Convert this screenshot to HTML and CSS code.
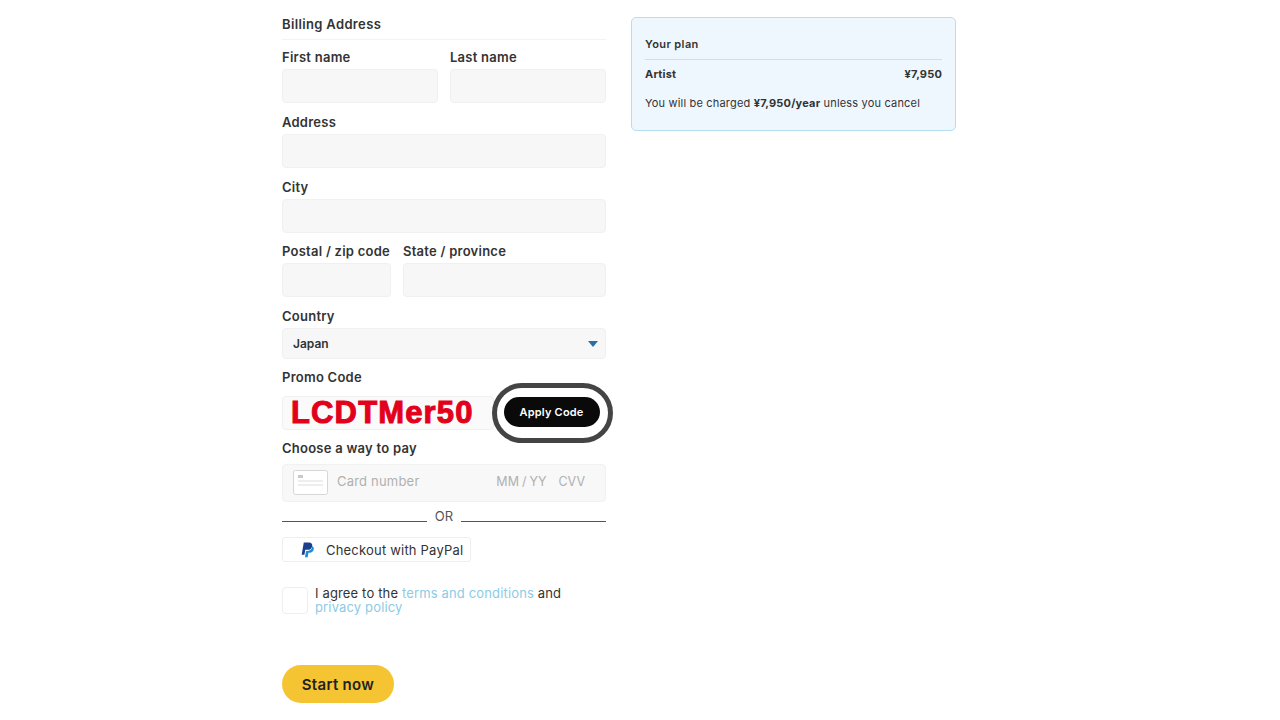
FILE: index.html
```html
<!DOCTYPE html>
<html lang="en">
<head>
    <meta charset="UTF-8">
    <meta name="viewport" content="width=device-width, initial-scale=1.0">
    <title>Checkout</title>
    <link rel="stylesheet" href="styles.css">
</head>
<body>
    <div class="page">
        <!-- Billing form -->
        <form class="billing">
            <h2 class="billing-title">Billing Address</h2>

            <div class="row">
                <div class="field half">
                    <label for="first">First name</label>
                    <input id="first" type="text">
                </div>
                <div class="field half">
                    <label for="last">Last name</label>
                    <input id="last" type="text">
                </div>
            </div>

            <div class="field">
                <label for="address">Address</label>
                <input id="address" type="text">
            </div>

            <div class="field">
                <label for="city">City</label>
                <input id="city" type="text">
            </div>

            <div class="row row-tight">
                <div class="field postal">
                    <label for="postal">Postal / zip code</label>
                    <input id="postal" type="text">
                </div>
                <div class="field state">
                    <label for="state">State / province</label>
                    <input id="state" type="text">
                </div>
            </div>

            <div class="field field-short">
                <label for="country">Country</label>
                <div class="select-wrap">
                    <select id="country">
                        <option>Japan</option>
                    </select>
                </div>
            </div>

            <div class="field field-short">
                <label class="promo-label" for="promo">Promo Code</label>
                <div class="promo">
                    <input id="promo" class="promo-input" type="text" value="LCDTMer50">
                    <div class="apply-ring">
                        <button class="apply" type="button">Apply Code</button>
                    </div>
                </div>
            </div>

            <div class="field">
                <label class="pay-label" for="card">Choose a way to pay</label>
                <div class="card-box">
                    <svg class="card-icon" width="35" height="25" viewBox="0 0 35 25">
                        <rect x="0.5" y="0.5" width="34" height="24" rx="2" fill="#fff" stroke="#d6d6d6"/>
                        <rect x="5" y="5" width="5" height="3" fill="#c9c9c9"/>
                        <path d="M5 11h25M5 15h25" stroke="#dcdcdc"/>
                    </svg>
                    <input id="card" class="card-number" type="text" placeholder="Card number">
                    <span class="card-hint">MM / YY</span>
                    <span class="card-hint">CVV</span>
                </div>
            </div>

            <div class="or"><span>OR</span></div>

            <button class="paypal" type="button">
                <svg width="13" height="16" viewBox="0 0 14 16">
                    <path d="M3 0h5.500c2.600 0 4 1.400 3.600 3.600-.5 2.800-2.400 4.200-5 4.200H4.600L3.700 13H.7z" fill="#1b3f8f"/>
                    <path d="M12.300 3.800c1.300.8 1.700 2 1.400 3.500-.5 2.400-2.100 3.600-4.400 3.600H8l-.8 5H4.300l.3-2L5.500 9h1.700c2.600 0 4.500-1.600 5.100-5.200z" fill="#1c8ad6"/>
                </svg>
                Checkout with PayPal
            </button>

            <div class="agree">
                <input id="agree" class="agree-box" type="checkbox">
                <label for="agree">I agree to the <a href="#">terms and conditions</a> and <a href="#">privacy policy</a></label>
            </div>

            <button class="start" type="submit">Start now</button>
        </form>

        <!-- Plan summary -->
        <aside class="plan">
            <h3 class="plan-title">Your plan</h3>
            <div class="plan-row">
                <span>Artist</span>
                <span>¥7,950</span>
            </div>
            <p class="plan-note">You will be charged <b>¥7,950/year</b> unless you cancel</p>
        </aside>
    </div>
</body>
</html>
```
FILE: styles.css
```css
body {
    font-family: Inter, "Open Sans", sans-serif;
    margin: 0;
    padding: 0;
    background-color: #fff;
    color: #333;
}

.page {
    display: flex;
    align-items: flex-start;
    gap: 25px;
    padding: 16px 0 0 282px;
}

/* Billing form */
.billing {
    width: 324px;
}
.billing-title {
    font-size: 13px;
    font-weight: 600;
    letter-spacing: 0.35px;
    line-height: 16px;
    margin: 0;
    padding-bottom: 7px;
    border-bottom: 1px solid #f3f3f3;
    margin-bottom: 9px;
}
.row {
    display: flex;
    gap: 12px;
}
.half {
    flex: 1;
}
.postal {
    width: 109px;
    flex: none;
}
.state {
    flex: 1;
}
.row-tight {
    margin-top: -1px;
}
.field {
    margin-bottom: 11px;
}
.field-short {
    margin-bottom: 10px;
}
.field label {
    display: block;
    font-size: 13px;
    font-weight: 600;
    letter-spacing: 0.25px;
    line-height: 16px;
    margin-bottom: 4px;
    white-space: nowrap;
}
.field input,
.field select {
    display: block;
    box-sizing: border-box;
    width: 100%;
    height: 34px;
    margin: 0;
    padding: 0 10px;
    font-family: inherit;
    background-color: #f7f7f7;
    border: 1px solid #f0f0f0;
    border-radius: 4px;
    outline: none;
}

/* Country select */
.select-wrap {
    position: relative;
}
.field select {
    height: 31px;
    appearance: none;
    font-size: 12px;
    font-weight: 600;
    color: #333;
}
.select-wrap::after {
    content: "";
    position: absolute;
    right: 8px;
    top: 13px;
    border-left: 5px solid transparent;
    border-right: 5px solid transparent;
    border-top: 6px solid #2a6ea5;
}

/* Promo code */
.field .promo-label {
    margin-bottom: 11px;
}
.promo {
    position: relative;
}
.field .promo-input {
    width: 212px;
    padding: 0 8px;
    font-family: "Liberation Sans", Arial, sans-serif;
    font-size: 31px;
    font-weight: 700;
    letter-spacing: 1.15px;
    -webkit-text-stroke: 1px #e2001a;
    color: #e2001a;
    background-color: #fafafa;
}
.apply-ring {
    position: absolute;
    left: 210px;
    top: -13px;
    display: flex;
    align-items: center;
    justify-content: center;
    box-sizing: border-box;
    width: 121px;
    height: 60px;
    background-color: #fff;
    border: 5px solid #444;
    border-radius: 30px;
}
.apply {
    width: 96px;
    height: 30px;
    margin: -2px 0 0 -2px;
    padding: 0;
    font-family: inherit;
    font-size: 11px;
    font-weight: 600;
    letter-spacing: 0.2px;
    color: #fff;
    background-color: #0a0a0a;
    border: none;
    border-radius: 15px;
}

/* Card box */
.field .pay-label {
    margin-bottom: 8px;
}
.card-box {
    display: flex;
    align-items: center;
    box-sizing: border-box;
    height: 38px;
    padding: 0 20px 1px 10px;
    background-color: #f8f8f8;
    border: 1px solid #f1f1f1;
    border-radius: 4px;
}
.card-icon {
    flex: none;
}
.field .card-number {
    flex: 1;
    min-width: 0;
    height: 20px;
    margin-bottom: 3px;
    padding: 0 0 0 9px;
    font-size: 13px;
    letter-spacing: 0.2px;
    background: none;
    border: none;
}
.card-number::placeholder {
    color: #b0b0b0;
}
.card-hint {
    font-size: 12.5px;
    word-spacing: -0.5px;
    color: #b0b0b0;
    margin: 0 0 3px 12px;
    white-space: nowrap;
}

/* OR divider */
.or {
    display: flex;
    align-items: center;
    gap: 8px;
    margin-top: -5px;
    font-size: 13px;
    line-height: 16px;
    color: #555;
}
.or::before,
.or::after {
    content: "";
    flex: 1;
    height: 1px;
    margin-top: 10px;
    background-color: #555;
}

/* PayPal */
.paypal {
    display: flex;
    align-items: center;
    gap: 12px;
    box-sizing: border-box;
    width: 189px;
    height: 25px;
    margin-top: 13px;
    padding: 0 0 0 18px;
    font-family: inherit;
    font-size: 13px;
    letter-spacing: 0.2px;
    white-space: nowrap;
    color: #333;
    background-color: #fff;
    border: 1px solid #eee;
    border-radius: 3px;
}

/* Terms */
.agree {
    display: flex;
    gap: 7px;
    margin-top: 25px;
}
.agree-box {
    appearance: none;
    flex: none;
    width: 26px;
    height: 27px;
    margin: 0;
    border: 1px solid #eee;
    border-radius: 4px;
}
.agree label {
    font-size: 13px;
    letter-spacing: 0.15px;
    line-height: 14px;
    margin-top: -1px;
    width: 270px;
}
.agree a {
    color: #8ccbe6;
    text-decoration: none;
}

/* Submit */
.start {
    display: block;
    width: 112px;
    height: 38px;
    margin-top: 51px;
    padding: 0;
    font-family: inherit;
    font-size: 15px;
    font-weight: 600;
    letter-spacing: 0.3px;
    color: #222;
    background-color: #f5c432;
    border: none;
    border-radius: 19px;
}

/* Plan summary */
.plan {
    box-sizing: border-box;
    width: 325px;
    height: 114px;
    margin-top: 1px;
    padding: 18px 13px 0;
    font-size: 11px;
    letter-spacing: 0.18px;
    background-color: #eff7fe;
    border: 1px solid #b5dff0;
    border-radius: 5px;
}
.plan-title {
    font-size: 11px;
    font-weight: 600;
    letter-spacing: 0.4px;
    line-height: 16px;
    margin: 0;
    padding-bottom: 7px;
    border-bottom: 1px solid #c9e3ee;
}
.plan-row {
    display: flex;
    justify-content: space-between;
    font-weight: 700;
    line-height: 16px;
    margin-top: 6px;
}
.plan-note {
    line-height: 16px;
    margin: 13px 0 0;
}
```
